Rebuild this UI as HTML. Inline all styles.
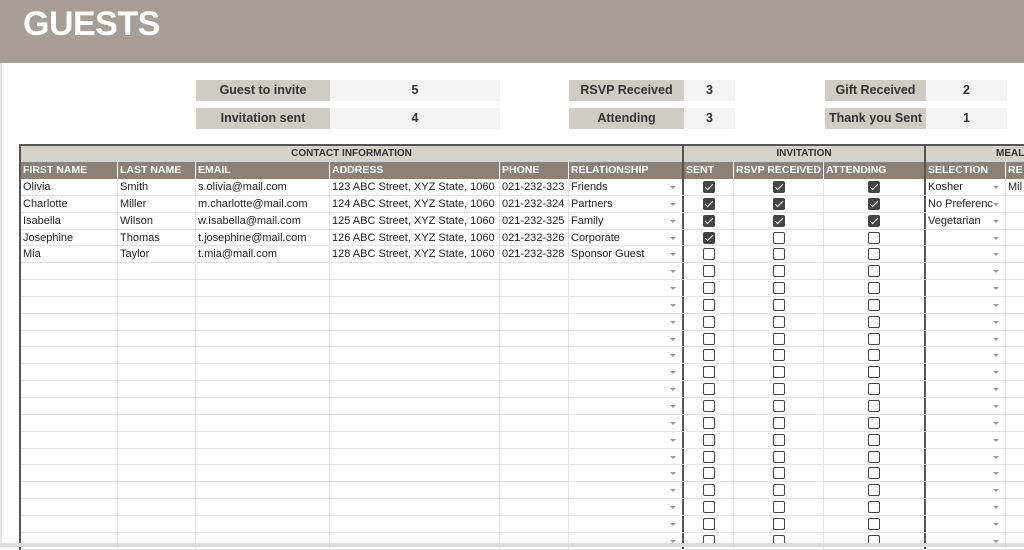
<!DOCTYPE html>
<html><head><meta charset="utf-8"><style>
*{margin:0;padding:0;box-sizing:border-box}
body{width:1024px;height:547px;overflow:hidden;background:#fff;font-family:"Liberation Sans",Arial,sans-serif;position:relative}
.hdr{position:absolute;left:0;top:0;width:1024px;height:63px;background:#a69e97}
.hdr h1{position:absolute;left:23px;top:5px;color:#fff;font-size:34px;font-weight:bold;letter-spacing:-0.5px}
.edge{position:absolute;left:0;top:63px;width:2px;height:484px;background:#e4e4e4}
.lb,.vb{position:absolute;height:21px;line-height:21px;text-align:center;font-weight:bold;font-size:12.5px;color:#333}
.lb{background:#cfcbc7}.vb{background:#f3f3f3}
.tbl{position:absolute;left:19px;top:144px;width:1030px;border-top:2px solid #555;border-left:2px solid #555}
.g1{height:16px;background:#d6d2ce;display:flex;font-size:10px;font-weight:bold;color:#333;line-height:16px}
.g1 div{text-align:center;border-right:2px solid #555;flex-shrink:0}
.r{display:flex;height:16.85px;border-bottom:1px solid #e3e3e3;font-size:11px;color:#222;line-height:16px}
.r i{font-style:normal;display:block;flex-shrink:0;height:100%;border-right:1px solid #e3e3e3;padding-left:2px;position:relative;white-space:nowrap;overflow:hidden}
.hd{background:#8c8177;color:#fff;font-weight:bold;font-size:10.5px;border-bottom:none;height:17px}
.hd i{border-right:1px solid #fff}
.a{width:97px}.b{width:78px}.c{width:134px}.d{width:170px}.e{width:69px}
.f{width:115px;border-right:2px solid #555!important}
.g{width:50px}.h{width:90px}
.j{width:102px;border-right:2px solid #555!important}
.l{width:80px}.m{width:40px}
.g,.h,.j{padding-left:0!important}
s{position:absolute;right:6px;top:7px;width:0;height:0;border-left:3px solid transparent;border-right:3px solid transparent;border-top:3px solid #999}
.k{position:absolute;left:50%;top:2px;margin-left:-6px;width:12px;height:12px;border:1.5px solid #444;border-radius:2px;background:#fff}
.k.y{background:#444}
.k.y::after{content:'';position:absolute;left:3px;top:0px;width:3px;height:7px;border:solid #fff;border-width:0 1.6px 1.6px 0;transform:rotate(45deg)}
.bot{position:absolute;left:0;top:543px;width:1024px;height:4px;background:#dcdcdc}
</style></head><body>
<div class="hdr"><h1>GUESTS</h1></div>
<div class="edge"></div>
<div class="lb" style="left:196px;top:80px;width:134px">Guest to invite</div><div class="vb" style="left:330px;top:80px;width:170px">5</div>
<div class="lb" style="left:196px;top:108px;width:134px">Invitation sent</div><div class="vb" style="left:330px;top:108px;width:170px">4</div>
<div class="lb" style="left:569px;top:80px;width:115px">RSVP Received</div><div class="vb" style="left:684px;top:80px;width:51px">3</div>
<div class="lb" style="left:569px;top:108px;width:115px">Attending</div><div class="vb" style="left:684px;top:108px;width:51px">3</div>
<div class="lb" style="left:825px;top:80px;width:101px">Gift Received</div><div class="vb" style="left:926px;top:80px;width:81px">2</div>
<div class="lb" style="left:825px;top:108px;width:101px">Thank you Sent</div><div class="vb" style="left:926px;top:108px;width:81px">1</div>
<div class="tbl">
<div class="g1"><div style="width:663px">CONTACT INFORMATION</div><div style="width:242px">INVITATION</div><div style="width:120px;border:none;text-align:left;padding-left:70px">MEAL</div></div>
<div class="r hd"><i class="a">FIRST NAME</i><i class="b">LAST NAME</i><i class="c">EMAIL</i><i class="d">ADDRESS</i><i class="e">PHONE</i><i class="f">RELATIONSHIP</i><i class="g" style="padding-left:2px!important">SENT</i><i class="h" style="padding-left:2px!important">RSVP RECEIVED</i><i class="j" style="padding-left:2px!important">ATTENDING</i><i class="l">SELECTION</i><i class="m">RE</i></div>
<div class="r"><i class="a">Olivia</i><i class="b">Smith</i><i class="c">s.olivia@mail.com</i><i class="d">123 ABC Street, XYZ State, 1060</i><i class="e">021-232-323</i><i class="f">Friends<s></s></i><i class="g"><b class="k y"></b></i><i class="h"><b class="k y"></b></i><i class="j"><b class="k y"></b></i><i class="l">Kosher<s></s></i><i class="m">Mil</i></div>
<div class="r"><i class="a">Charlotte</i><i class="b">Miller</i><i class="c">m.charlotte@mail.com</i><i class="d">124 ABC Street, XYZ State, 1060</i><i class="e">021-232-324</i><i class="f">Partners<s></s></i><i class="g"><b class="k y"></b></i><i class="h"><b class="k y"></b></i><i class="j"><b class="k y"></b></i><i class="l">No Preferenc<s></s></i><i class="m"></i></div>
<div class="r"><i class="a">Isabella</i><i class="b">Wilson</i><i class="c">w.isabella@mail.com</i><i class="d">125 ABC Street, XYZ State, 1060</i><i class="e">021-232-325</i><i class="f">Family<s></s></i><i class="g"><b class="k y"></b></i><i class="h"><b class="k y"></b></i><i class="j"><b class="k y"></b></i><i class="l">Vegetarian<s></s></i><i class="m"></i></div>
<div class="r"><i class="a">Josephine</i><i class="b">Thomas</i><i class="c">t.josephine@mail.com</i><i class="d">126 ABC Street, XYZ State, 1060</i><i class="e">021-232-326</i><i class="f">Corporate<s></s></i><i class="g"><b class="k y"></b></i><i class="h"><b class="k"></b></i><i class="j"><b class="k"></b></i><i class="l"><s></s></i><i class="m"></i></div>
<div class="r"><i class="a">Mia</i><i class="b">Taylor</i><i class="c">t.mia@mail.com</i><i class="d">128 ABC Street, XYZ State, 1060</i><i class="e">021-232-328</i><i class="f">Sponsor Guest<s></s></i><i class="g"><b class="k"></b></i><i class="h"><b class="k"></b></i><i class="j"><b class="k"></b></i><i class="l"><s></s></i><i class="m"></i></div>
<div class="r"><i class="a"></i><i class="b"></i><i class="c"></i><i class="d"></i><i class="e"></i><i class="f"><s></s></i><i class="g"><b class="k"></b></i><i class="h"><b class="k"></b></i><i class="j"><b class="k"></b></i><i class="l"><s></s></i><i class="m"></i></div>
<div class="r"><i class="a"></i><i class="b"></i><i class="c"></i><i class="d"></i><i class="e"></i><i class="f"><s></s></i><i class="g"><b class="k"></b></i><i class="h"><b class="k"></b></i><i class="j"><b class="k"></b></i><i class="l"><s></s></i><i class="m"></i></div>
<div class="r"><i class="a"></i><i class="b"></i><i class="c"></i><i class="d"></i><i class="e"></i><i class="f"><s></s></i><i class="g"><b class="k"></b></i><i class="h"><b class="k"></b></i><i class="j"><b class="k"></b></i><i class="l"><s></s></i><i class="m"></i></div>
<div class="r"><i class="a"></i><i class="b"></i><i class="c"></i><i class="d"></i><i class="e"></i><i class="f"><s></s></i><i class="g"><b class="k"></b></i><i class="h"><b class="k"></b></i><i class="j"><b class="k"></b></i><i class="l"><s></s></i><i class="m"></i></div>
<div class="r"><i class="a"></i><i class="b"></i><i class="c"></i><i class="d"></i><i class="e"></i><i class="f"><s></s></i><i class="g"><b class="k"></b></i><i class="h"><b class="k"></b></i><i class="j"><b class="k"></b></i><i class="l"><s></s></i><i class="m"></i></div>
<div class="r"><i class="a"></i><i class="b"></i><i class="c"></i><i class="d"></i><i class="e"></i><i class="f"><s></s></i><i class="g"><b class="k"></b></i><i class="h"><b class="k"></b></i><i class="j"><b class="k"></b></i><i class="l"><s></s></i><i class="m"></i></div>
<div class="r"><i class="a"></i><i class="b"></i><i class="c"></i><i class="d"></i><i class="e"></i><i class="f"><s></s></i><i class="g"><b class="k"></b></i><i class="h"><b class="k"></b></i><i class="j"><b class="k"></b></i><i class="l"><s></s></i><i class="m"></i></div>
<div class="r"><i class="a"></i><i class="b"></i><i class="c"></i><i class="d"></i><i class="e"></i><i class="f"><s></s></i><i class="g"><b class="k"></b></i><i class="h"><b class="k"></b></i><i class="j"><b class="k"></b></i><i class="l"><s></s></i><i class="m"></i></div>
<div class="r"><i class="a"></i><i class="b"></i><i class="c"></i><i class="d"></i><i class="e"></i><i class="f"><s></s></i><i class="g"><b class="k"></b></i><i class="h"><b class="k"></b></i><i class="j"><b class="k"></b></i><i class="l"><s></s></i><i class="m"></i></div>
<div class="r"><i class="a"></i><i class="b"></i><i class="c"></i><i class="d"></i><i class="e"></i><i class="f"><s></s></i><i class="g"><b class="k"></b></i><i class="h"><b class="k"></b></i><i class="j"><b class="k"></b></i><i class="l"><s></s></i><i class="m"></i></div>
<div class="r"><i class="a"></i><i class="b"></i><i class="c"></i><i class="d"></i><i class="e"></i><i class="f"><s></s></i><i class="g"><b class="k"></b></i><i class="h"><b class="k"></b></i><i class="j"><b class="k"></b></i><i class="l"><s></s></i><i class="m"></i></div>
<div class="r"><i class="a"></i><i class="b"></i><i class="c"></i><i class="d"></i><i class="e"></i><i class="f"><s></s></i><i class="g"><b class="k"></b></i><i class="h"><b class="k"></b></i><i class="j"><b class="k"></b></i><i class="l"><s></s></i><i class="m"></i></div>
<div class="r"><i class="a"></i><i class="b"></i><i class="c"></i><i class="d"></i><i class="e"></i><i class="f"><s></s></i><i class="g"><b class="k"></b></i><i class="h"><b class="k"></b></i><i class="j"><b class="k"></b></i><i class="l"><s></s></i><i class="m"></i></div>
<div class="r"><i class="a"></i><i class="b"></i><i class="c"></i><i class="d"></i><i class="e"></i><i class="f"><s></s></i><i class="g"><b class="k"></b></i><i class="h"><b class="k"></b></i><i class="j"><b class="k"></b></i><i class="l"><s></s></i><i class="m"></i></div>
<div class="r"><i class="a"></i><i class="b"></i><i class="c"></i><i class="d"></i><i class="e"></i><i class="f"><s></s></i><i class="g"><b class="k"></b></i><i class="h"><b class="k"></b></i><i class="j"><b class="k"></b></i><i class="l"><s></s></i><i class="m"></i></div>
<div class="r"><i class="a"></i><i class="b"></i><i class="c"></i><i class="d"></i><i class="e"></i><i class="f"><s></s></i><i class="g"><b class="k"></b></i><i class="h"><b class="k"></b></i><i class="j"><b class="k"></b></i><i class="l"><s></s></i><i class="m"></i></div>
<div class="r"><i class="a"></i><i class="b"></i><i class="c"></i><i class="d"></i><i class="e"></i><i class="f"><s></s></i><i class="g"><b class="k"></b></i><i class="h"><b class="k"></b></i><i class="j"><b class="k"></b></i><i class="l"><s></s></i><i class="m"></i></div>
</div>
<div class="bot"></div>
</body></html>
